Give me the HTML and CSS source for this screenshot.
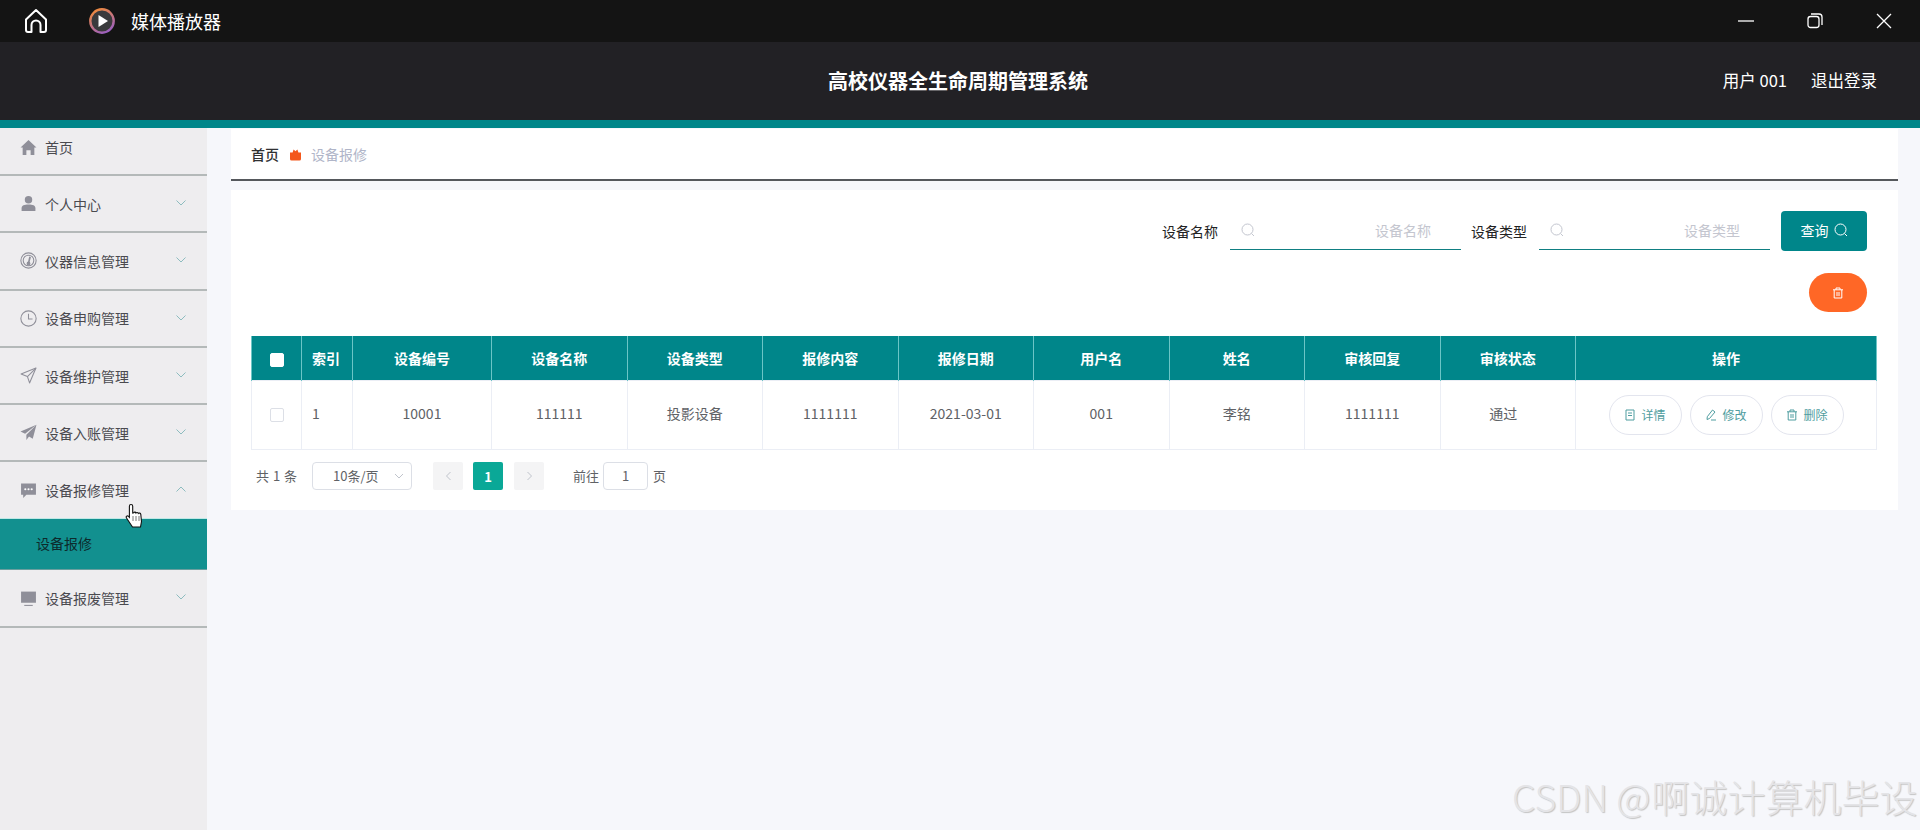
FILE: index.html
```html
<!DOCTYPE html>
<html>
<head>
  <meta charset="utf-8">
  <title>高校仪器全生命周期管理系统</title>
  <link rel="stylesheet" href="styles.css">
</head>
<body>
  <div class="titlebar">
    <svg class="tb-home" width="24" height="26" viewBox="0 0 24 26" fill="none" stroke="#fff" stroke-width="2" stroke-linejoin="round"><path d="M2 11.5 12 2l10 9.5V22a2 2 0 0 1-2 2h-3.5v-7a4.5 4.5 0 0 0-9 0v7H4a2 2 0 0 1-2-2z"/></svg>
    <svg class="tb-play" width="28" height="28" viewBox="0 0 28 28">
      <defs><linearGradient id="ring" x1="0.2" y1="0" x2="0.7" y2="1"><stop offset="0" stop-color="#f08a3c"/><stop offset="1" stop-color="#9a5fc0"/></linearGradient></defs>
      <circle cx="14" cy="14" r="11.7" fill="#3a3a3c" stroke="url(#ring)" stroke-width="2.4"/>
      <path d="M10.5 8 20 14l-9.500 6z" fill="#fff"/>
    </svg>
    <span class="tb-name">媒体播放器</span>
    <div class="tb-win">
      <svg width="16" height="16" viewBox="0 0 16 16" stroke="#fff" stroke-width="1.3"><path d="M0 8h16"/></svg>
      <svg width="16" height="16" viewBox="0 0 16 16" fill="none" stroke="#fff" stroke-width="1.300"><rect x="1" y="3.500" width="11" height="11" rx="2.500"/><path d="M4 1h8a3 3 0 0 1 3 3v8"/></svg>
      <svg width="16" height="16" viewBox="0 0 16 16" stroke="#fff" stroke-width="1.300"><path d="M1 1l14 14M15 1 1 15"/></svg>
    </div>
  </div>

  <header class="topbar">
    <h1>高校仪器全生命周期管理系统</h1>
    <div class="top-user"><span>用户 001</span><span>退出登录</span></div>
  </header>

  <div class="layout">
    <aside class="sidebar">
      <div class="menu-item first">
        <svg class="mi-icon" viewBox="0 0 16 16" fill="#8f8f99"><path d="M8 1 15.500 8h-2v7H10v-4.500H6V15H2.500V8h-2z"/></svg>
        <span>首页</span>
      </div>
      <div class="menu-item">
        <svg class="mi-icon" viewBox="0 0 16 16" fill="#8f8f99"><circle cx="8" cy="4.500" r="3.500"/><path d="M1.500 15v-2.500C1.500 10 4 9 8 9s6.500 1 6.500 3.500V15z"/></svg>
        <span>个人中心</span>
        <svg class="chev" viewBox="0 0 12 8"><path d="M1.500 1.500 6 6l4.500-4.500"/></svg>
      </div>
      <div class="menu-item">
        <svg class="mi-icon" viewBox="0 0 16 16" fill="none" stroke="#8f8f99"><circle cx="8" cy="8" r="7.200"/><circle cx="8" cy="8" r="5"/><path d="M9.500 4.500 8 10.500" stroke-width="1.600"/><circle cx="8" cy="10.800" r="1.300" fill="#8f8f99"/></svg>
        <span>仪器信息管理</span>
        <svg class="chev" viewBox="0 0 12 8"><path d="M1.500 1.500 6 6l4.500-4.500"/></svg>
      </div>
      <div class="menu-item">
        <svg class="mi-icon" viewBox="0 0 16 16" fill="none" stroke="#8f8f99"><circle cx="8" cy="8" r="7.200"/><path d="M8 3.500V8.500h3.800"/></svg>
        <span>设备申购管理</span>
        <svg class="chev" viewBox="0 0 12 8"><path d="M1.500 1.500 6 6l4.500-4.500"/></svg>
      </div>
      <div class="menu-item">
        <svg class="mi-icon" viewBox="0 0 16 16" fill="none" stroke="#8f8f99" stroke-linejoin="round"><path d="M15 1 1 6.500l6 2.500 2 6z"/><path d="M15 1 7 9"/></svg>
        <span>设备维护管理</span>
        <svg class="chev" viewBox="0 0 12 8"><path d="M1.500 1.500 6 6l4.500-4.500"/></svg>
      </div>
      <div class="menu-item">
        <svg class="mi-icon" viewBox="0 0 16 16" fill="#8f8f99"><path d="M15.500.8 .5 7l4.300 2.200L15.500.8zM15.500.8 6 10v5l2.500-3.200 3.500 2z"/></svg>
        <span>设备入账管理</span>
        <svg class="chev" viewBox="0 0 12 8"><path d="M1.500 1.500 6 6l4.500-4.500"/></svg>
      </div>
      <div class="menu-group">
        <div class="menu-item open">
          <svg class="mi-icon" viewBox="0 0 16 16"><path d="M1 1.500h14v10.500H6l-3 3v-3H1z" fill="#8f8f99"/><circle cx="5" cy="6.800" r="1" fill="#fff"/><circle cx="8" cy="6.800" r="1" fill="#fff"/><circle cx="11" cy="6.800" r="1" fill="#fff"/></svg>
          <span>设备报修管理</span>
          <svg class="chev" viewBox="0 0 12 8"><path d="M1.500 6.500 6 2l4.500 4.500"/></svg>
        </div>
        <div class="submenu-item">设备报修</div>
      </div>
      <div class="menu-item">
        <svg class="mi-icon" viewBox="0 0 16 16" fill="#8f8f99"><path d="M1 1.500h14V12H1z"/><path d="M4 14h8v1H4z"/></svg>
        <span>设备报废管理</span>
        <svg class="chev" viewBox="0 0 12 8"><path d="M1.500 1.500 6 6l4.500-4.500"/></svg>
      </div>
    </aside>

    <main class="content">
      <div class="breadcrumb">
        <span class="bc-home">首页</span>
        <svg class="bc-sep" width="13" height="13" viewBox="0 0 13 13" fill="#f4581c"><path d="M1 4.500h2.600L4.600 1.500l1.900 1.800 1.900-1.800 1 3H12V11a1.500 1.500 0 0 1-1.500 1.500h-8A1.500 1.500 0 0 1 1 11z"/></svg>
        <span class="bc-cur">设备报修</span>
      </div>

      <section class="card">
        <form class="search-row">
          <label class="s-label">设备名称</label>
          <div class="s-input s-input-name">
            <svg width="14" height="14" viewBox="0 0 14 14" fill="none" stroke="#c3c6cf"><circle cx="6.500" cy="6.500" r="5.500"/><path d="m10.500 10.500 2.500 2.500"/></svg>
            <input placeholder="设备名称">
          </div>
          <label class="s-label">设备类型</label>
          <div class="s-input">
            <svg width="14" height="14" viewBox="0 0 14 14" fill="none" stroke="#c3c6cf"><circle cx="6.500" cy="6.500" r="5.500"/><path d="m10.500 10.500 2.500 2.500"/></svg>
            <input placeholder="设备类型">
          </div>
          <button type="button" class="btn-query">查询
            <svg width="14" height="14" viewBox="0 0 14 14" fill="none" stroke="#fff"><circle cx="6.500" cy="6.500" r="5.500"/><path d="m10.500 10.500 2.500 2.500"/></svg>
          </button>
        </form>

        <div class="tool-row">
          <button type="button" class="btn-del">
            <svg width="12" height="12" viewBox="0 0 12 12" fill="none" stroke="#fff"><path d="M1 2.800h10M4 2.800V1h4v1.800M2.200 2.800V11h7.600V2.800M5 5v4M7 5v4"/></svg>
          </button>
        </div>

        <table class="grid">
          <thead>
            <tr>
              <th class="c-check"><span class="cb cb-head"></span></th>
              <th class="c-index">索引</th>
              <th class="c-first">设备编号</th>
              <th>设备名称</th>
              <th>设备类型</th>
              <th>报修内容</th>
              <th>报修日期</th>
              <th>用户名</th>
              <th>姓名</th>
              <th>审核回复</th>
              <th>审核状态</th>
              <th class="c-ops">操作</th>
            </tr>
          </thead>
          <tbody>
            <tr>
              <td class="c-check"><span class="cb"></span></td>
              <td class="c-index">1</td>
              <td>10001</td>
              <td>111111</td>
              <td>投影设备</td>
              <td>1111111</td>
              <td>2021-03-01</td>
              <td>001</td>
              <td>李铭</td>
              <td>1111111</td>
              <td class="c-status">通过</td>
              <td class="c-ops">
                <div class="ops">
                  <button type="button" class="btn-op">
                    <svg viewBox="0 0 12 12" fill="none" stroke="#4f9da0"><path d="M2 1h8v10H2zM4 4h4M4 6.500h4"/></svg>详情
                  </button>
                  <button type="button" class="btn-op">
                    <svg viewBox="0 0 12 12" fill="none" stroke="#4f9da0"><path d="M7.500 1 10 3 4.500 9.500 2 10.500l.3-2.800zM6 11h5"/></svg>修改
                  </button>
                  <button type="button" class="btn-op">
                    <svg viewBox="0 0 12 12" fill="none" stroke="#4f9da0"><path d="M1 2.800h10M4 2.800V1h4v1.800M2.200 2.800V11h7.600V2.800M5 5v4M7 5v4"/></svg>删除
                  </button>
                </div>
              </td>
            </tr>
          </tbody>
        </table>

        <div class="pager">
          <span class="p-total">共 1 条</span>
          <div class="p-size"><span class="p-text">10条/页</span>
            <svg width="10" height="6" viewBox="0 0 10 6" fill="none" stroke="#c0c4cc"><path d="m1 1 4 4 4-4"/></svg>
          </div>
          <span class="p-btn p-prev"><svg width="7" height="10" viewBox="0 0 7 10" fill="none" stroke="#c0c4cc"><path d="M5.500 1 1.500 5l4 4"/></svg></span>
          <span class="p-num">1</span>
          <span class="p-btn p-next"><svg width="7" height="10" viewBox="0 0 7 10" fill="none" stroke="#c0c4cc"><path d="m1.500 1 4 4-4 4"/></svg></span>
          <span class="p-goto">前往</span>
          <span class="p-input">1</span>
          <span class="p-page">页</span>
        </div>
      </section>
    </main>
  </div>

  <svg class="cursor" width="20" height="26" viewBox="0 0 20 26"><path d="M6 1.500c1 0 1.700.7 1.700 1.800V10l1-.2c.3-.9 2-.9 2.300.2.500-.8 2-.7 2.300.4.600-.6 2.200-.4 2.500 1l.7 7.100L15.500 24H7.500L1.500 15c-1-1.500.8-2.800 2-1.600l.9 1V3.300c0-1 .7-1.800 1.600-1.800z" fill="#fff" stroke="#111" stroke-width="1.100"/><path d="M8 13v5M11 13v5M14 13v5" stroke="#555" stroke-width=".8"/></svg>
  <div class="watermark"><span class="wm-latin">CSDN @</span>啊诚计算机毕设</div>
</body>
</html>
```

FILE: styles.css
```css
* { box-sizing: border-box; }
html, body { margin: 0; height: 830px; overflow: hidden; }
body { font-family: "Noto Sans CJK SC", "Noto Sans", sans-serif; background: #f6f7fb; color: #606266; font-size: 14px; position: relative; }

.titlebar { height: 42px; background: #141414; display: flex; align-items: center; color: #fff; padding-left: 24px; }
.tb-home { margin-right: 40px; }
.tb-name { font-size: 18px; margin-left: 15px; }
.tb-win { margin-left: auto; display: flex; gap: 53px; padding-right: 28px; }

.topbar { height: 78px; background: #222125; display: flex; align-items: center; justify-content: center; position: relative; color: #fff; padding-bottom: 2px; }
.topbar h1 { margin: 0 4px 0 0; font-size: 20px; font-weight: bold; }
.top-user { position: absolute; right: 43px; top: 26px; display: flex; gap: 24px; font-size: 16.500px; line-height: 24px; }

.layout { display: flex; height: 710px; border-top: 8px solid #00868a; }

.sidebar { width: 207px; background: #eeedef; flex-shrink: 0; }
.menu-item { height: 57.300px; display: flex; align-items: center; padding-left: 20px; border-bottom: 2px solid #b4b9b9; color: #4a4a4f; position: relative; }
.menu-item.first { height: 48px; padding-bottom: 8px; }
.menu-item.open { height: 56px; border-bottom: 0; }
.menu-item span { margin-left: 8px; }
.mi-icon { width: 17px; height: 17px; flex-shrink: 0; }
.chev { width: 12px; height: 8px; position: absolute; left: 175px; top: 23px; fill: none; stroke: #8dbcbf; stroke-width: 1; }
.submenu-item { height: 52px; background: #12908f; border-top: 1px solid #bfe9e6; border-bottom: 1px solid #6b9f9f; color: #0d2a2c; padding-left: 36px; line-height: 48px; }

.content { flex: 1; padding: 1px 22px 0 24px; }
.breadcrumb { height: 52px; background: #fff; border-bottom: 2px solid #55585c; display: flex; align-items: center; padding-left: 20px; }
.bc-home { color: #303133; font-weight: 500; }
.bc-sep { margin: 0 9px 0 10px; }
.bc-cur { color: #b0b5c8; }

.card { margin-top: 9px; height: 320px; background: #fff; padding: 21px 21px 0 20px; }

.search-row { display: flex; justify-content: flex-end; align-items: center; padding-right: 10px; }
.s-label { color: #222; margin-right: 12px; }
.s-input { width: 231px; height: 39px; margin-bottom: 1px; border-bottom: 1px solid #0f7f82; display: flex; align-items: center; padding-left: 11px; margin-right: 9px; }
.s-input-name { margin-right: 10px; }
.s-input input { flex: 1; min-width: 0; border: 0; outline: 0; background: none; text-align: right; padding: 0 30px 0 0; font: inherit; }
.s-input input::placeholder { color: #c4c6cf; }
.btn-query { width: 86px; height: 40px; margin-left: 2px; border: 0; border-radius: 4px; background: #00868a; color: #fff; font: inherit; font-size: 14px; display: flex; align-items: center; justify-content: center; gap: 5px; padding: 0 0 2px; }

.tool-row { display: flex; justify-content: flex-end; margin-top: 22px; padding-right: 10px; }
.btn-del { width: 58px; height: 39px; border: 0; border-radius: 20px; background: #ff6726; display: flex; align-items: center; justify-content: center; }

.grid { width: 1626px; margin-top: 24px; border-collapse: collapse; table-layout: fixed; }
.grid th { height: 44px; background: #00868a; color: #fff; font-weight: bold; font-size: 14px; border: 1px solid #6cc5c6; border-width: 0 1px; padding: 0; text-align: center; }
.grid td { height: 69px; text-align: center; border: 1px solid #ebeef5; padding: 0 0 3px; color: #606266; }
.grid th.c-check, .grid td.c-check { width: 50px; }
.grid th.c-index, .grid td.c-index { width: 51px; text-align: left; padding-left: 10px; }
.grid th.c-first { width: 139px; }
.grid td.c-status { padding-right: 9px; }
.grid th.c-ops, .grid td.c-ops { width: 301px; padding-bottom: 0; }
.cb { display: inline-block; vertical-align: middle; width: 14px; height: 14px; border: 1px solid #dcdfe6; border-radius: 2px; background: #fff; }
.cb-head { border-color: #fff; }
.ops { display: flex; justify-content: center; gap: 8px; }
.btn-op { width: 73px; height: 40px; border: 1px solid #e3e5ee; border-radius: 20px; background: #fff; color: #4f9da0; font: inherit; font-size: 12px; display: flex; align-items: center; justify-content: center; gap: 5px; padding: 0; }
.btn-op svg { width: 12px; height: 12px; }

.pager { display: flex; align-items: center; height: 29px; margin-top: 12px; font-size: 13px; color: #606266; padding-left: 5px; }
.p-total { width: 56px; word-spacing: 1px; padding-bottom: 2px; }
.p-size { width: 100px; height: 28px; border: 1px solid #dcdfe6; border-radius: 4px; display: flex; align-items: center; justify-content: space-between; padding: 0 7px 0 20px; margin-right: 21px; }
.p-text { padding-bottom: 2px; }
.p-btn { width: 30px; height: 28px; background: #f4f4f5; border-radius: 2px; display: flex; align-items: center; justify-content: center; }
.p-num { width: 30px; height: 28px; margin: 0 11px 0 10px; background: #0aa897; color: #fff; border-radius: 2px; font-weight: bold; display: flex; align-items: center; justify-content: center; }
.p-goto { margin-left: 29px; padding-bottom: 2px; }
.p-input { width: 45px; height: 28px; margin: 0 5px 0 4px; border: 1px solid #dcdfe6; border-radius: 4px; display: flex; align-items: center; justify-content: center; padding-bottom: 2px; }
.p-page { padding-bottom: 2px; }

.cursor { position: absolute; left: 125px; top: 503px; }
.watermark { position: absolute; left: 1512px; top: 771px; font-size: 38px; line-height: 50px; white-space: nowrap; color: #e4e4e7; font-weight: 300; text-shadow: 1px 1px 1px #c4c4c4; }
.wm-latin { font-size: 37.500px; margin-right: 1px; }
```
